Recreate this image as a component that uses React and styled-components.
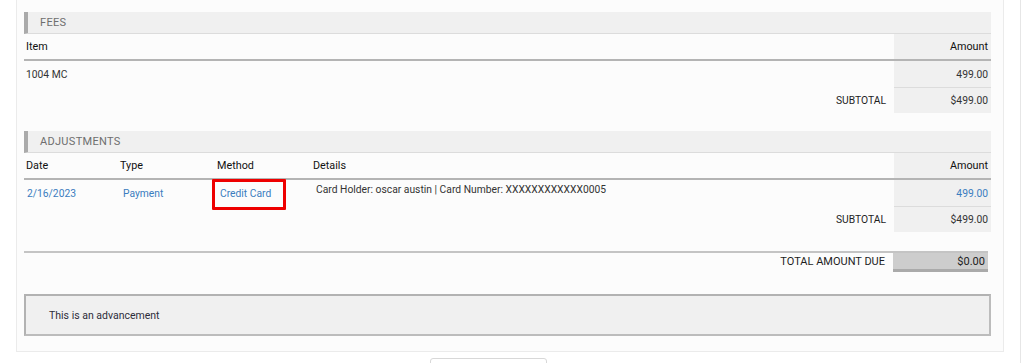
import React from "react";
import styled, { createGlobalStyle } from "styled-components";

const GlobalStyle = createGlobalStyle`
  html, body { margin: 0; padding: 0; background: #ffffff; }
  body { font-family: Roboto, "Liberation Sans", Arial, sans-serif; font-size: 10.3px; color: #333; }
  * { box-sizing: border-box; }
`;

const Page = styled.div`
  width: 1021px;
  min-height: 363px;
  border-right: 1px solid #e6e6e6;
  display: flex;
  flex-direction: column;
`;

const Panel = styled.div`
  margin-left: 16px;
  width: 988px;
  background: #fcfcfc;
  border: 1px solid #ebebeb;
  border-top: none;
  padding: 12px 12px 15px 7px;
  display: flex;
  flex-direction: column;
`;

const Section = styled.section`
  display: flex;
  flex-direction: column;
  margin-top: ${(p) => p.$gap || 0}px;
`;

const SectionHeader = styled.div`
  height: 22px;
  background: #f0f0f0;
  border-left: 4px solid #aaaaaa;
  border-bottom: 1px solid #dcdcdc;
  padding-left: 12px;
  line-height: 21px;
  font-size: 11px;
  color: #6e6e6e;
  letter-spacing: 0.3px;
  text-transform: uppercase;
`;

const Row = styled.div`
  display: grid;
  grid-template-columns: ${(p) => p.$cols};
  height: ${(p) => p.$h}px;
  border-bottom: ${(p) => (p.$head ? "2px solid #b4b4b4" : "none")};
`;

const Cell = styled.div`
  position: relative;
  display: flex;
  align-items: ${(p) => (p.$top ? "flex-start" : "center")};
  justify-content: ${(p) => (p.$right ? "flex-end" : "flex-start")};
  padding-left: ${(p) => p.$pl ?? 2}px;
  padding-right: ${(p) => p.$pr ?? 0}px;
  padding-top: ${(p) => (p.$top ? 3 : 0)}px;
  color: ${(p) => (p.$link ? "#3b7dbf" : p.$head ? "#111" : "#333")};
  font-size: ${(p) => (p.$head ? "10.8px" : "inherit")};
  white-space: nowrap;
`;

const AmountCell = styled(Cell)`
  background: #f0f0f0;
  justify-content: flex-end;
  padding-left: 0;
  padding-right: 3px;
  border-bottom: ${(p) => (p.$line ? "1px solid #dcdcdc" : "none")};
`;

const LabelCell = styled(Cell)`
  grid-column: 1 / -2;
  justify-content: flex-end;
  padding-right: 8px;
  color: #1e1e1e;
  font-size: 10.3px;
`;

const Highlight = styled.span`
  position: absolute;
  left: -3px;
  top: -1px;
  width: 74px;
  height: 31px;
  border: 3px solid #ee0000;
  border-radius: 1px;
  pointer-events: none;
`;

const TotalRow = styled.div`
  margin-top: 19px;
  border-top: 2px solid #c4c4c4;
  display: grid;
  grid-template-columns: 1fr 95px;
  margin-right: 3px;
  height: 21px;
`;

const TotalLabel = styled.div`
  display: flex;
  align-items: center;
  justify-content: flex-end;
  padding-right: 8px;
  padding-bottom: 3px;
  color: #1e1e1e;
  font-size: 11px;
`;

const TotalValue = styled.div`
  background: #cdcdcd;
  border-bottom: 3px solid #aaaaaa;
  display: flex;
  align-items: center;
  justify-content: flex-end;
  padding-right: 3px;
  color: #222;
  font-size: 11px;
`;

const Note = styled.div`
  margin-top: 22px;
  height: 42px;
  background: #f0f0f0;
  border: 2px solid #b2b2b2;
  border-right-color: #bcbcbc;
  border-bottom-color: #bcbcbc;
  display: flex;
  align-items: center;
  padding-left: 23px;
  color: #2d2d3a;
  font-size: 10.5px;
`;

const Footer = styled.div`
  display: flex;
  padding-left: 430px;
  padding-top: 6px;
`;

const Button = styled.button`
  width: 117px;
  height: 30px;
  border: 1px solid #d8d8d8;
  border-radius: 3px;
  background: #ffffff;
`;

const FEE_COLS = "1fr 97px";
const ADJ_COLS = "94px 97px 96px 1fr 97px";

export default function App() {
  return (
    <>
      <GlobalStyle />
      <Page>
        <Panel>
          <Section>
            <SectionHeader>Fees</SectionHeader>
            <Row $cols={FEE_COLS} $h={27} $head>
              <Cell $head>Item</Cell>
              <AmountCell $head>Amount</AmountCell>
            </Row>
            <Row $cols={FEE_COLS} $h={27}>
              <Cell>1004 MC</Cell>
              <AmountCell $line>499.00</AmountCell>
            </Row>
            <Row $cols={FEE_COLS} $h={25}>
              <LabelCell>SUBTOTAL</LabelCell>
              <AmountCell>$499.00</AmountCell>
            </Row>
          </Section>

          <Section $gap={18}>
            <SectionHeader>Adjustments</SectionHeader>
            <Row $cols={ADJ_COLS} $h={27} $head>
              <Cell $head>Date</Cell>
              <Cell $head>Type</Cell>
              <Cell $head>Method</Cell>
              <Cell $head>Details</Cell>
              <AmountCell $head>Amount</AmountCell>
            </Row>
            <Row $cols={ADJ_COLS} $h={27}>
              <Cell $pl={3} $link>2/16/2023</Cell>
              <Cell $pl={5} $link>Payment</Cell>
              <Cell $pl={5} $link>
                Credit Card
                <Highlight />
              </Cell>
              <Cell $pl={5} $top>
                Card Holder: oscar austin | Card Number: XXXXXXXXXXXX0005
              </Cell>
              <AmountCell $line $link>499.00</AmountCell>
            </Row>
            <Row $cols={ADJ_COLS} $h={25}>
              <LabelCell>SUBTOTAL</LabelCell>
              <AmountCell>$499.00</AmountCell>
            </Row>
          </Section>

          <TotalRow>
            <TotalLabel>TOTAL AMOUNT DUE</TotalLabel>
            <TotalValue>$0.00</TotalValue>
          </TotalRow>

          <Note>This is an advancement</Note>
        </Panel>
        <Footer>
          <Button type="button" aria-label="Close" />
        </Footer>
      </Page>
    </>
  );
}
